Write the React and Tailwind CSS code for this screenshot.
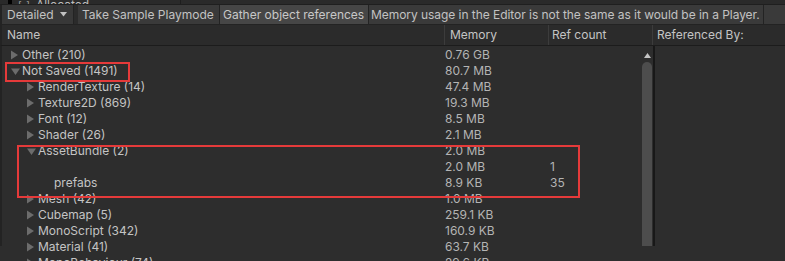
import React from "react";

const rows = [
  { l: 0, a: "r", n: "Other (210)", m: "0.76 GB" },
  { l: 0, a: "d", n: "Not Saved (1491)", m: "80.7 MB" },
  { l: 1, a: "r", n: "RenderTexture (14)", m: "47.4 MB" },
  { l: 1, a: "r", n: "Texture2D (869)", m: "19.3 MB" },
  { l: 1, a: "r", n: "Font (12)", m: "8.5 MB" },
  { l: 1, a: "r", n: "Shader (26)", m: "2.1 MB" },
  { l: 1, a: "d", n: "AssetBundle (2)", m: "2.0 MB" },
  { l: 2, a: "", n: "", m: "2.0 MB", c: "1" },
  { l: 2, a: "", n: "prefabs", m: "8.9 KB", c: "35" },
  { l: 1, a: "r", n: "Mesh (42)", m: "1.0 MB" },
  { l: 1, a: "r", n: "Cubemap (5)", m: "259.1 KB" },
  { l: 1, a: "r", n: "MonoScript (342)", m: "160.9 KB" },
  { l: 1, a: "r", n: "Material (41)", m: "63.7 KB" },
  { l: 1, a: "r", n: "MonoBehaviour (74)", m: "29.6 KB" },
];

function Arrow({ dir }) {
  if (dir === "r")
    return (
      <svg width="7" height="10" viewBox="0 0 7 10" className="shrink-0">
        <path d="M0 0.5 L7 5 L0 9.5 Z" fill="#6c6c6c" />
      </svg>
    );
  if (dir === "d")
    return (
      <svg width="9" height="7" viewBox="0 0 9 7" className="shrink-0">
        <path d="M0 0.5 L9 0.5 L4.5 7 Z" fill="#6c6c6c" />
      </svg>
    );
  return null;
}

const pad = ["pl-[9px]", "pl-[25px]", "pl-[41px]"];

export default function App() {
  return (
    <div
      className="w-[785px] h-[261px] overflow-hidden bg-[#2d2d2d] text-[12px] text-[#c4c4c4] relative"
      style={{ fontFamily: "Inter, 'Noto Sans', sans-serif" }}
    >
      {/* top cut-off strip */}
      <div className="h-[4px] overflow-hidden flex bg-[#2a2a2a]">
        <div className="w-[181px] border-r border-[#1e1e1e] flex items-end">
          <div className="flex items-center gap-[6px] pl-[8px] -mb-[9px] h-[16px]">
            <div className="w-[4px] h-[12px] bg-black" />
            <span className="text-[#a0a0a0] text-[10px]">[-]</span>
            <span className="text-[#bbbbbb]">Allocated</span>
          </div>
        </div>
      </div>
      {/* toolbar */}
      <div className="h-[21px] flex bg-[#3a3a3a] border-t border-[#1f1f1f] border-b border-b-[#232323] border-l-2 border-l-[#232323]">
        <div className="w-[71px] flex items-center pl-[5px] bg-[#383838] text-[#c2c2c2]">
          <span>Detailed</span>
          <svg width="7" height="5" viewBox="0 0 7 5" className="ml-[6px]">
            <path d="M0 0 L7 0 L3.5 4.5 Z" fill="#c2c2c2" />
          </svg>
        </div>
        <div className="w-[5px] bg-[#2b2b2b] border-l border-[#232323]" />
        <div className="w-[142px] flex items-center pl-[4px] bg-[#3a3a3a] border-r border-[#232323] text-[#c2c2c2]">
          Take Sample Playmode
        </div>
        <div className="w-[149px] flex items-center pl-[3px] bg-[#464646] border-r border-[#232323] text-[#c8c8c8]">
          Gather object references
        </div>
        <div className="w-[395px] flex items-center pl-[2px] bg-[#3a3a3a] border-r border-[#232323] text-[#c2c2c2] whitespace-nowrap tracking-[-0.05px]">
          Memory usage in the Editor is not the same as it would be in a Player.
        </div>
        <div className="flex-1 bg-[#3a3a3a]" />
      </div>
      {/* header */}
      <div className="h-[21px] flex bg-[#2b2b2b] border-b border-[#1c1c1c] border-l-2 border-l-[#232323] text-[#c4c4c4]">
        <div className="w-[443px] flex items-center pl-[5px] border-r border-[#3c3c3c]">Name</div>
        <div className="w-[104px] flex items-center pl-[5px] border-r border-[#3c3c3c]">Memory</div>
        <div className="w-[104px] flex items-center pl-[3px] border-r border-[#3c3c3c]">Ref count</div>
        <div className="flex-1 flex items-center pl-[4px]">Referenced By:</div>
      </div>
      {/* body */}
      <div className="flex h-[200px] border-l-2 border-l-[#232323]">
        <div className="w-[639px] pt-[1px]">
          {rows.map((r, i) => (
            <div key={i} className="h-[16px] flex items-center whitespace-nowrap">
              <div className={`w-[443px] flex items-center ${pad[r.l]}`}>
                <div className="w-[11px] flex items-center">
                  <Arrow dir={r.a} />
                </div>
                <span className="text-[#c4c4c4]">{r.n}</span>
              </div>
              <div className="w-[105px] text-[#b4b4b4]">{r.m}</div>
              <div className="text-[#b4b4b4]">{r.c || ""}</div>
            </div>
          ))}
        </div>
        <div className="w-[12px] flex flex-col items-center pt-[7px]">
          <svg width="7" height="5" viewBox="0 0 7 5">
            <path d="M0 5 L3.5 0 L7 5 Z" fill="#c4c4c4" />
          </svg>
          <div className="mt-[4px] w-[10px] flex-1 bg-[#4d4d4d] rounded-t-[5px]" />
        </div>
        <div className="w-[2px] bg-[#181818]" />
        <div className="flex-1 bg-[#2d2d2d]" />
      </div>
      {/* highlight boxes */}
      <div className="absolute left-[5px] top-[62px] w-[125px] h-[20px] border-2 border-[#e53a3a]" />
      <div className="absolute left-[17px] top-[145px] w-[563px] h-[53px] border-2 border-[#e53a3a]" />
    </div>
  );
}
